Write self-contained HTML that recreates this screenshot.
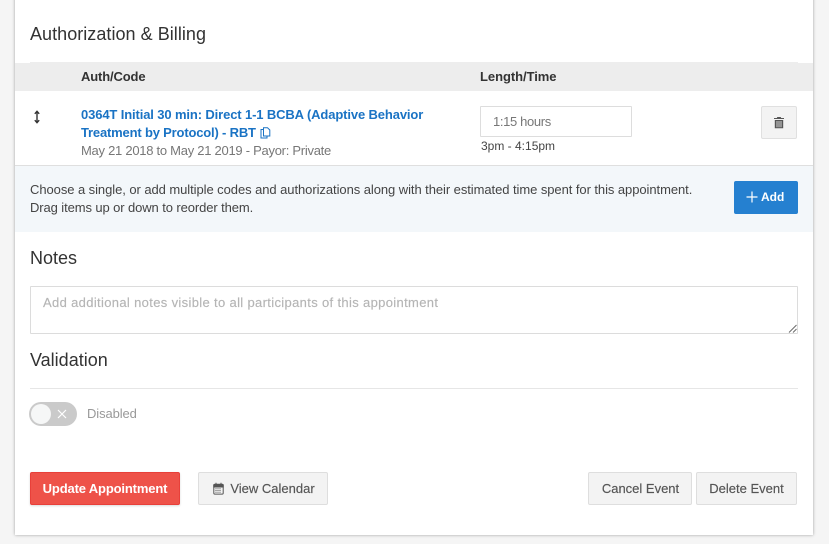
<!DOCTYPE html>
<html>
<head>
<meta charset="utf-8">
<style>
html,body{margin:0;padding:0;width:829px;height:544px;overflow:hidden;background:#f5f5f5;font-family:"Liberation Sans",sans-serif;color:#333}
.a{position:absolute;white-space:nowrap}
#card{position:absolute;left:15px;top:-5px;width:798px;height:540px;background:#fff;box-shadow:0 0 3px rgba(0,0,0,.35)}
.h{font-size:18px;line-height:22px;color:#333}
.btn{position:absolute;box-sizing:border-box;border:1px solid #dedede;background:#f3f3f3;border-radius:2px;font-size:13px;font-weight:400;color:#555;text-align:center;height:33px;line-height:32px;white-space:nowrap;-webkit-text-stroke:.15px #555}
</style>
</head>
<body>
<div id="card"></div>
<div class="a h" style="left:30px;top:23px;letter-spacing:.04px">Authorization &amp; Billing</div>

<div class="a" style="left:30px;top:62px;width:768px;height:1px;background:#ededed"></div>
<div class="a" style="left:15px;top:63px;width:798px;height:28px;background:#ededed"></div>
<div class="a" style="left:81px;top:70px;font-size:13px;line-height:14px;font-weight:700;color:#333;letter-spacing:-.14px">Auth/Code</div>
<div class="a" style="left:480px;top:70px;font-size:13px;line-height:14px;font-weight:700;color:#333;letter-spacing:-.05px">Length/Time</div>

<svg class="a" style="left:32px;top:110px" width="10" height="14" viewBox="0 0 10 14"><path d="M5 1.500V12.500M2.800 3.800L5 1.300 7.200 3.800M2.800 10.200L5 12.700 7.200 10.200" fill="none" stroke="#333" stroke-width="1.400"/></svg>

<div class="a" style="left:81px;top:106px;font-size:13px;line-height:18px;font-weight:700;color:#1a73c4;letter-spacing:-.125px">0364T Initial 30 min: Direct 1-1 BCBA (Adaptive Behavior</div>
<div class="a" style="left:81px;top:124px;font-size:13px;line-height:18px;font-weight:700;color:#1a73c4;letter-spacing:-.18px">Treatment by Protocol) - RBT</div>
<svg class="a" style="left:260px;top:127px" width="11" height="12" viewBox="0 0 11 12"><path d="M3.500 2.500H1V11H7V9M3.500 .8H7.500L9.800 3V9H3.500Z" fill="none" stroke="#1a73c4" stroke-width="1"/></svg>
<div class="a" style="left:81px;top:143px;font-size:13px;line-height:16px;color:#777;letter-spacing:-.27px">May 21 2018 to May 21 2019 - Payor: Private</div>

<div class="a" style="left:480px;top:106px;width:152px;height:31px;box-sizing:border-box;border:1px solid #ddd;font-size:13px;line-height:30px;padding-left:12px;color:#777;background:#fff;border-radius:1px;letter-spacing:-.35px">1:15 hours</div>
<div class="a" style="left:481px;top:139px;font-size:12px;line-height:14px;color:#444">3pm - 4:15pm</div>

<div class="a" style="left:761px;top:106px;width:36px;height:33px;box-sizing:border-box;background:#f3f3f3;border:1px solid #e0e0e0;border-radius:2px"></div>
<svg class="a" style="left:773px;top:116px" width="12" height="13" viewBox="0 0 12 13"><path d="M4.300 1H7.700L8.200 2H11V3H1V2H3.800Z M1.800 4H10.200V12.200H1.800Z" fill="#555"/><path d="M4 5V11.200M6 5V11.200M8 5V11.200" stroke="#f3f3f3" stroke-width=".8"/></svg>

<div class="a" style="left:15px;top:165px;width:798px;height:67px;background:#f3f7fa;border-top:1px solid #dfdfdf;box-sizing:border-box"></div>
<div class="a" style="left:30px;top:181px;font-size:13px;line-height:18px;color:#444;letter-spacing:-.065px">Choose a single, or add multiple codes and authorizations along with their estimated time spent for this appointment.</div>
<div class="a" style="left:30px;top:199px;font-size:13px;line-height:18px;color:#444;letter-spacing:-.1px">Drag items up or down to reorder them.</div>

<div class="a" style="left:734px;top:181px;width:64px;height:33px;background:#2580d0;border-radius:2px"></div>
<svg class="a" style="left:746px;top:191px" width="12" height="12" viewBox="0 0 12 12"><path d="M6 .5V11.500M.5 6H11.500" stroke="#fff" stroke-width="1.200"/></svg>
<div class="a" style="left:761px;top:190px;font-size:12px;line-height:15px;font-weight:700;color:#fff">Add</div>

<div class="a h" style="left:30px;top:247px">Notes</div>
<div class="a" style="left:30px;top:286px;width:768px;height:48px;box-sizing:border-box;border:1px solid #dcdcdc;border-radius:1px;background:#fff"></div>
<div class="a" style="left:43px;top:295px;font-size:13px;line-height:15px;color:#b5b5b5;letter-spacing:.34px;-webkit-text-stroke:.15px #b5b5b5">Add additional notes visible to all participants of this appointment</div>
<svg class="a" style="left:788px;top:324px" width="9" height="9" viewBox="0 0 9 9"><path d="M8.500 1L1 8.500M8.500 5L5 8.500" stroke="#666" stroke-width=".9"/></svg>

<div class="a h" style="left:30px;top:349px">Validation</div>
<div class="a" style="left:30px;top:388px;width:768px;height:1px;background:#e6e6e6"></div>

<div class="a" style="left:29px;top:402px;width:48px;height:24px;border-radius:12px;background:#cacaca"></div>
<div class="a" style="left:31px;top:404px;width:20px;height:20px;border-radius:50%;background:#f6f7f7"></div>
<svg class="a" style="left:57px;top:409px" width="10" height="10" viewBox="0 0 10 10"><path d="M1 1L9 9M9 1L1 9" stroke="#fff" stroke-width="1.200"/></svg>
<div class="a" style="left:87px;top:406px;font-size:13px;line-height:15px;color:#999;letter-spacing:-.1px">Disabled</div>

<div class="a" style="left:30px;top:472px;width:150px;height:33px;box-sizing:border-box;background:#ee5249;border:1px solid #e8403a;border-radius:2px;box-shadow:0 1px 2px rgba(0,0,0,.15);color:#fff;font-size:13px;font-weight:700;text-align:center;line-height:32px;letter-spacing:-.15px">Update Appointment</div>

<div class="btn" style="left:198px;top:472px;width:130px;padding-left:19px">View Calendar</div>
<svg class="a" style="left:213px;top:482px" width="11" height="13" viewBox="0 0 11 13"><rect x=".8" y="2.300" width="9.400" height="9.800" rx="1" fill="none" stroke="#555"/><path d="M.8 3H10.200V5H.8ZM3 .8V3M8 .8V3" stroke="#555" fill="#555"/><path d="M2.500 6.800H8.500M2.500 8.500H8.500M2.500 10.200H8.500" stroke="#555" stroke-dasharray="1 1"/></svg>

<div class="btn" style="left:588px;top:472px;width:104px;padding-left:1px">Cancel Event</div>
<div class="btn" style="left:696px;top:472px;width:101px">Delete Event</div>
</body>
</html>
